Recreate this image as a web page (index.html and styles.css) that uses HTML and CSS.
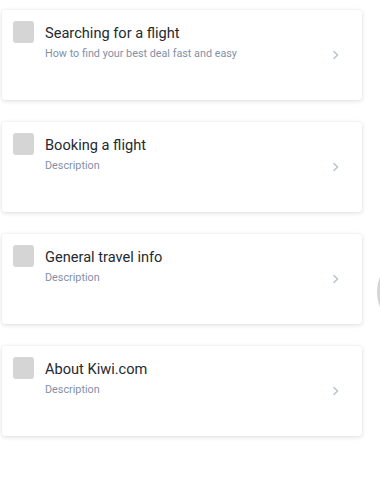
FILE: index.html
```html
<!DOCTYPE html>
<html>
<head>
<meta charset="utf-8">
<link rel="stylesheet" href="styles.css">
</head>
<body>
<div class="list">
  <a class="card">
    <span class="icon"></span>
    <span class="text">
      <span class="title">Searching for a flight</span>
      <span class="desc">How to find your best deal fast and easy</span>
    </span>
    <svg class="chev" width="8" height="10" viewBox="0 0 8 10"><path d="M2 1.5 L5.5 5 L2 8.5" fill="none" stroke="#b3c2d6" stroke-width="1.5" stroke-linecap="round" stroke-linejoin="round"/></svg>
  </a>
  <a class="card">
    <span class="icon"></span>
    <span class="text">
      <span class="title">Booking a flight</span>
      <span class="desc">Description</span>
    </span>
    <svg class="chev" width="8" height="10" viewBox="0 0 8 10"><path d="M2 1.5 L5.5 5 L2 8.5" fill="none" stroke="#b3c2d6" stroke-width="1.5" stroke-linecap="round" stroke-linejoin="round"/></svg>
  </a>
  <a class="card">
    <span class="icon"></span>
    <span class="text">
      <span class="title">General travel info</span>
      <span class="desc">Description</span>
    </span>
    <svg class="chev" width="8" height="10" viewBox="0 0 8 10"><path d="M2 1.5 L5.5 5 L2 8.5" fill="none" stroke="#b3c2d6" stroke-width="1.5" stroke-linecap="round" stroke-linejoin="round"/></svg>
  </a>
  <a class="card">
    <span class="icon"></span>
    <span class="text">
      <span class="title">About Kiwi.com</span>
      <span class="desc">Description</span>
    </span>
    <svg class="chev" width="8" height="10" viewBox="0 0 8 10"><path d="M2 1.5 L5.5 5 L2 8.5" fill="none" stroke="#b3c2d6" stroke-width="1.5" stroke-linecap="round" stroke-linejoin="round"/></svg>
  </a>
</div>
<div class="orb-clip"><div class="orb"></div></div>
</body>
</html>
```
FILE: styles.css
```css
html, body {
  margin: 0;
  padding: 0;
  background: #ffffff;
  overflow: hidden;
}
body {
  width: 380px;
  height: 497px;
  position: relative;
  font-family: Roboto, "Liberation Sans", sans-serif;
}
.list {
  display: flex;
  flex-direction: column;
  gap: 22px;
  padding: 10px 18px 0 2px;
}
.card {
  display: flex;
  align-items: flex-start;
  height: 90px;
  box-sizing: border-box;
  padding: 11px 0 0 11px;
  background: #fff;
  border-radius: 3px;
  box-shadow: 0 1px 4px rgba(37, 42, 49, 0.16), 0 0 1px rgba(37, 42, 49, 0.08);
  position: relative;
}
.icon {
  width: 21px;
  height: 22px;
  border-radius: 3px;
  background: #d5d5d5;
  flex: none;
}
.text {
  display: flex;
  flex-direction: column;
  margin-left: 11px;
  padding-top: 2px;
  flex: 1;
}
.title {
  font-size: 14.6px;
  font-weight: 400;
  line-height: 20px;
  color: #252a31;
}
.desc {
  font-size: 10.8px;
  line-height: 14px;
  color: #7f91a8;
  margin-top: 4px;
}
.chev {
  flex: none;
  margin: 29px 22px 0 0;
}
.orb-clip {
  position: absolute;
  left: 377px;
  top: 250px;
  width: 3px;
  height: 84px;
  overflow: hidden;
}
.orb {
  width: 84px;
  height: 84px;
  border-radius: 50%;
  background: radial-gradient(circle at 50% 50%, #e8e8e8 0%, #d0d0d0 80%, #a8a8a8 100%);
}
```
